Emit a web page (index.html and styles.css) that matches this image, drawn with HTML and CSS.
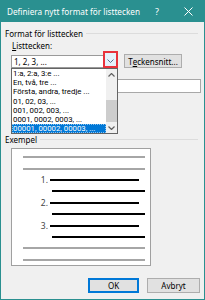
FILE: index.html
```html
<!DOCTYPE html>
<html lang="sv">
<head>
<meta charset="utf-8">
<title>Definiera nytt format för listtecken</title>
<link rel="stylesheet" href="styles.css">
</head>
<body>
<div class="window">
  <div class="titlebar">
    <span class="title">Definiera nytt format för listtecken</span>
    <span class="tb-help">?</span>
    <span class="tb-close"><svg width="9" height="9" viewBox="0 0 9 9"><path d="M0.5 0.5 L8.5 8.5 M8.5 0.5 L0.5 8.5" stroke="#fff" stroke-width="1" fill="none"/></svg></span>
  </div>
  <div class="content">
    <div class="group-head"><span>Format för listtecken</span><i class="rule"></i></div>
    <div class="label"><u>L</u>isttecken:</div>
    <div class="combo-row">
      <div class="combo">
        <span class="combo-text">1, 2, 3, ...</span>
        <span class="combo-btn"><svg width="7" height="4" viewBox="0 0 7 4"><path d="M0.5 0.5 L3.5 3.5 L6.5 0.5" stroke="#5a6f8c" stroke-width="1" fill="none"/></svg></span>
        <div class="dropdown">
          <ul class="items">
            <li>1:a, 2:a, 3:e ...</li>
            <li>En, två, tre ...</li>
            <li>Första, andra, tredje ...</li>
            <li>01, 02, 03, ...</li>
            <li>001, 002, 003, ...</li>
            <li>0001, 0002, 0003, ...</li>
            <li class="selected">00001, 00002, 00003, ...</li>
          </ul>
          <div class="scrollbar">
            <span class="sb-arrow up"><svg width="7" height="4" viewBox="0 0 7 4"><path d="M0.5 3.5 L3.5 0.5 L6.5 3.5" stroke="#606060" stroke-width="1.2" fill="none"/></svg></span>
            <span class="sb-track"></span>
            <span class="sb-thumb"></span>
            <span class="sb-arrow down"><svg width="7" height="4" viewBox="0 0 7 4"><path d="M0.5 0.5 L3.5 3.5 L6.5 0.5" stroke="#606060" stroke-width="1.2" fill="none"/></svg></span>
          </div>
        </div>
      </div>
      <button class="btn font-btn">T<u>e</u>ckensnitt...</button>
    </div>
    <div class="textbox"></div>
    <div class="group-head exempel"><span>Exempel</span><i class="rule"></i></div>
    <div class="preview">
      <div class="pv-row"><i class="bar gray"></i></div>
      <div class="pv-row"><i class="bar gray"></i></div>
      <div class="pv-row num-row"><span class="num">1.</span><i class="bar black short"></i></div>
      <div class="pv-row cont-row"><i class="bar black"></i></div>
      <div class="pv-row num-row"><span class="num">2.</span><i class="bar black short"></i></div>
      <div class="pv-row cont-row"><i class="bar black"></i></div>
      <div class="pv-row num-row"><span class="num">3.</span><i class="bar black short"></i></div>
      <div class="pv-row cont-row"><i class="bar black"></i></div>
      <div class="pv-row"><i class="bar gray"></i></div>
      <div class="pv-row"><i class="bar gray"></i></div>
    </div>
    <div class="buttons">
      <button class="btn ok">OK</button>
      <button class="btn cancel">Avbryt</button>
    </div>
  </div>
</div>
</body>
</html>
```
FILE: styles.css
```css
* { box-sizing: border-box; }
html, body { margin: 0; padding: 0; }
body {
  font-family: "Noto Sans", "Open Sans", sans-serif;
  font-size: 8px;
  color: #000;
  background: #f0f0f0;
}
.window {
  width: 205px;
  height: 300px;
  background: #f0f0f0;
  border: 1px solid #2a9090;
  border-top: none;
  overflow: hidden;
}
.titlebar {
  height: 22px;
  background: #2a9090;
  color: #fff;
  display: flex;
  align-items: center;
  margin: 0 -1px;
  padding-left: 7px;
}
.title { font-size: 8.2px; flex: 1; white-space: nowrap; }
.tb-help { width: 10px; text-align: center; font-size: 9px; margin-right: 22px; }
.tb-close { width: 9px; height: 9px; display: flex; margin-right: 12px; }

.content { display: flex; flex-direction: column; }

.group-head {
  height: 10px;
  margin-top: 6px;
  padding-left: 4px;
  margin-right: 6px;
  display: flex;
  align-items: center;
  white-space: nowrap;
}
.group-head .rule {
  flex: 1;
  height: 1px;
  background: #dcdcdc;
  margin-left: 3px;
}
.label {
  height: 10px;
  margin-top: 3px;
  padding-left: 11px;
  line-height: 10px;
}
.label u, .btn u { text-decoration-thickness: 1px; text-underline-offset: 1px; }

.combo-row {
  height: 17px;
  display: flex;
  align-items: flex-end;
  padding-left: 10px;
}
.combo {
  position: relative;
  width: 107px;
  height: 13px;
  background: #fff;
  border: 1px solid #9a9a9a;
  display: flex;
  align-items: center;
  padding-left: 2px;
}
.combo-text { line-height: 11px; }
.combo-btn {
  position: absolute;
  right: -1px;
  top: -5px;
  width: 15px;
  height: 17px;
  border: 2px solid #e8323c;
  background: #e5f1fb;
  display: flex;
  align-items: center;
  justify-content: center;
  padding-top: 3px;
  z-index: 3;
}
.dropdown {
  position: absolute;
  left: -1px;
  top: 12px;
  width: 107px;
  height: 66.4px;
  background: #fff;
  border: 1px solid #646464;
  display: flex;
  z-index: 2;
}
.items {
  list-style: none;
  margin: 0;
  padding: 0;
  flex: 1;
  font-family: Roboto, "Noto Sans", sans-serif;
  font-size: 7.8px;
}
.items li {
  height: 9.2px;
  line-height: 9.2px;
  padding-left: 1px;
  white-space: nowrap;
  overflow: hidden;
}
.items li.selected {
  background: #0078d7;
  color: #fff;
  outline: 1px dotted rgba(255,255,255,0.55);
  outline-offset: -1px;
}
.scrollbar {
  width: 11px;
  background: #f0f0f0;
  display: flex;
  flex-direction: column;
}
.sb-arrow {
  display: flex;
  align-items: center;
  justify-content: center;
}
.sb-arrow.up { height: 12px; }
.sb-arrow.down { height: 11px; }
.sb-track { flex: 1; }
.sb-thumb { height: 22px; background: #cdcdcd; }

.btn {
  font-family: inherit;
  font-size: 8px;
  color: #000;
  background: #e1e1e1;
  border: 1px solid #adadad;
  padding: 0;
  margin: 0;
  display: flex;
  align-items: center;
  justify-content: center;
}
.font-btn {
  width: 58px;
  height: 14px;
  margin-left: 6px;
}
.textbox {
  margin-top: 11px;
  margin-left: 10px;
  width: 190px;
  height: 14px;
  background: #fff;
  border: 1px solid #a8a8a8;
}
.group-head.exempel { margin-top: 41px; }

.preview {
  margin-top: 4px;
  margin-left: 10px;
  width: 140px;
  height: 118px;
  background: #fff;
  border: 1px solid #a0a0a0;
  padding: 2.5px 5px 0 11px;
  display: flex;
  flex-direction: column;
}
.pv-row {
  height: 11.4px;
  flex: none;
  display: flex;
  align-items: center;
}
.bar { display: block; flex: 1; height: 2px; }
.bar.gray { background: #a6a6a6; }
.bar.black { background: #000; }
.bar.short { margin-right: 6px; }
.num {
  width: 27px;
  text-align: right;
  padding-right: 2px;
  color: #444;
  font-size: 8.5px;
  line-height: 10px;
}
.cont-row { padding-left: 29px; }

.buttons {
  margin-top: 12px;
  height: 15px;
  display: flex;
  justify-content: flex-end;
  gap: 8px;
  padding-right: 4px;
}
.buttons .btn { height: 15px; }
.ok { width: 51px; border: 1px solid #0078d7; box-shadow: inset 0 0 0 1px #0078d7; }
.cancel { width: 53px; }
```
